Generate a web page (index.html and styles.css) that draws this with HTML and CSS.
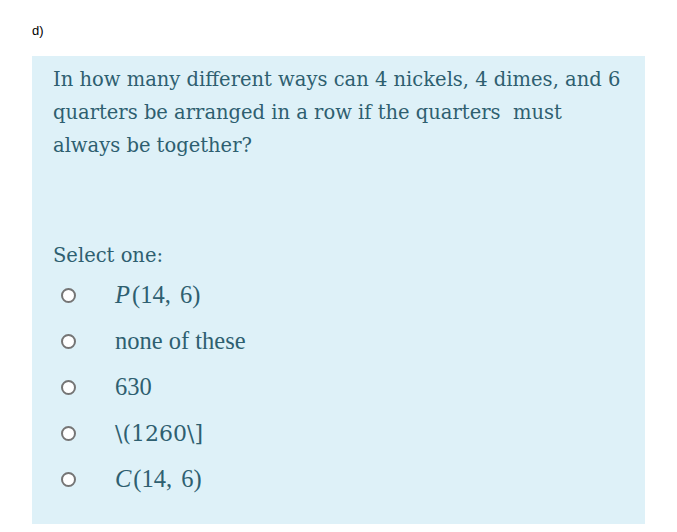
FILE: index.html
```html
<!DOCTYPE html>
<html>
<head>
<meta charset="utf-8">
<link rel="stylesheet" href="styles.css">
</head>
<body>
<div class="label">d)</div>
<div class="box">
  <p class="question">In how many different ways can 4 nickels, 4 dimes, and 6 quarters be arranged in a row if the quarters &nbsp;must always be together?</p>
  <div class="prompt">Select one:</div>
  <ul class="options">
    <li class="option"><span class="radio"></span><span class="math"><i class="var">P</i>(14, 6)</span></li>
    <li class="option"><span class="radio"></span><span class="plain">none of these</span></li>
    <li class="option"><span class="radio"></span><span class="plain">630</span></li>
    <li class="option"><span class="radio"></span><span class="raw">\(1260\]</span></li>
    <li class="option"><span class="radio"></span><span class="math"><i class="var">C</i>(14, 6)</span></li>
  </ul>
</div>
</body>
</html>
```
FILE: styles.css
```css
html, body {
  margin: 0;
  padding: 0;
  background: #ffffff;
}
body {
  padding: 22px 32px 0 32px;
  width: 613px;
}
.label {
  font-family: "Liberation Sans", Arial, sans-serif;
  font-size: 13px;
  line-height: 18px;
  color: #000;
  height: 16px;
}
.box {
  margin-top: 18px;
  background: #def1f8;
  padding: 7px 21px 14px 21px;
  height: 468px;
  box-sizing: border-box;
  color: #2e5f70;
}
.question {
  margin: 0;
  font-family: "DejaVu Serif", Georgia, serif;
  font-size: 19.5px;
  line-height: 33px;
}
.prompt {
  margin-top: 77px;
  font-family: "DejaVu Serif", Georgia, serif;
  font-size: 19.5px;
  line-height: 33px;
}
.options {
  list-style: none;
  margin: 0;
  padding: 0;
}
.option {
  display: flex;
  align-items: center;
  height: 46px;
}
.radio {
  width: 15px;
  height: 15px;
  box-sizing: border-box;
  border: 2px solid #757575;
  border-radius: 50%;
  background: #fff;
  margin-left: 8px;
  margin-right: 39px;
  flex: none;
}
.math, .plain {
  font-family: "Liberation Serif", "Times New Roman", serif;
  font-size: 24.5px;
}
.math {
  word-spacing: 3px;
}
.var {
  margin-right: 2px;
}
.raw {
  font-family: "DejaVu Serif", Georgia, serif;
  font-size: 22px;
}
```
